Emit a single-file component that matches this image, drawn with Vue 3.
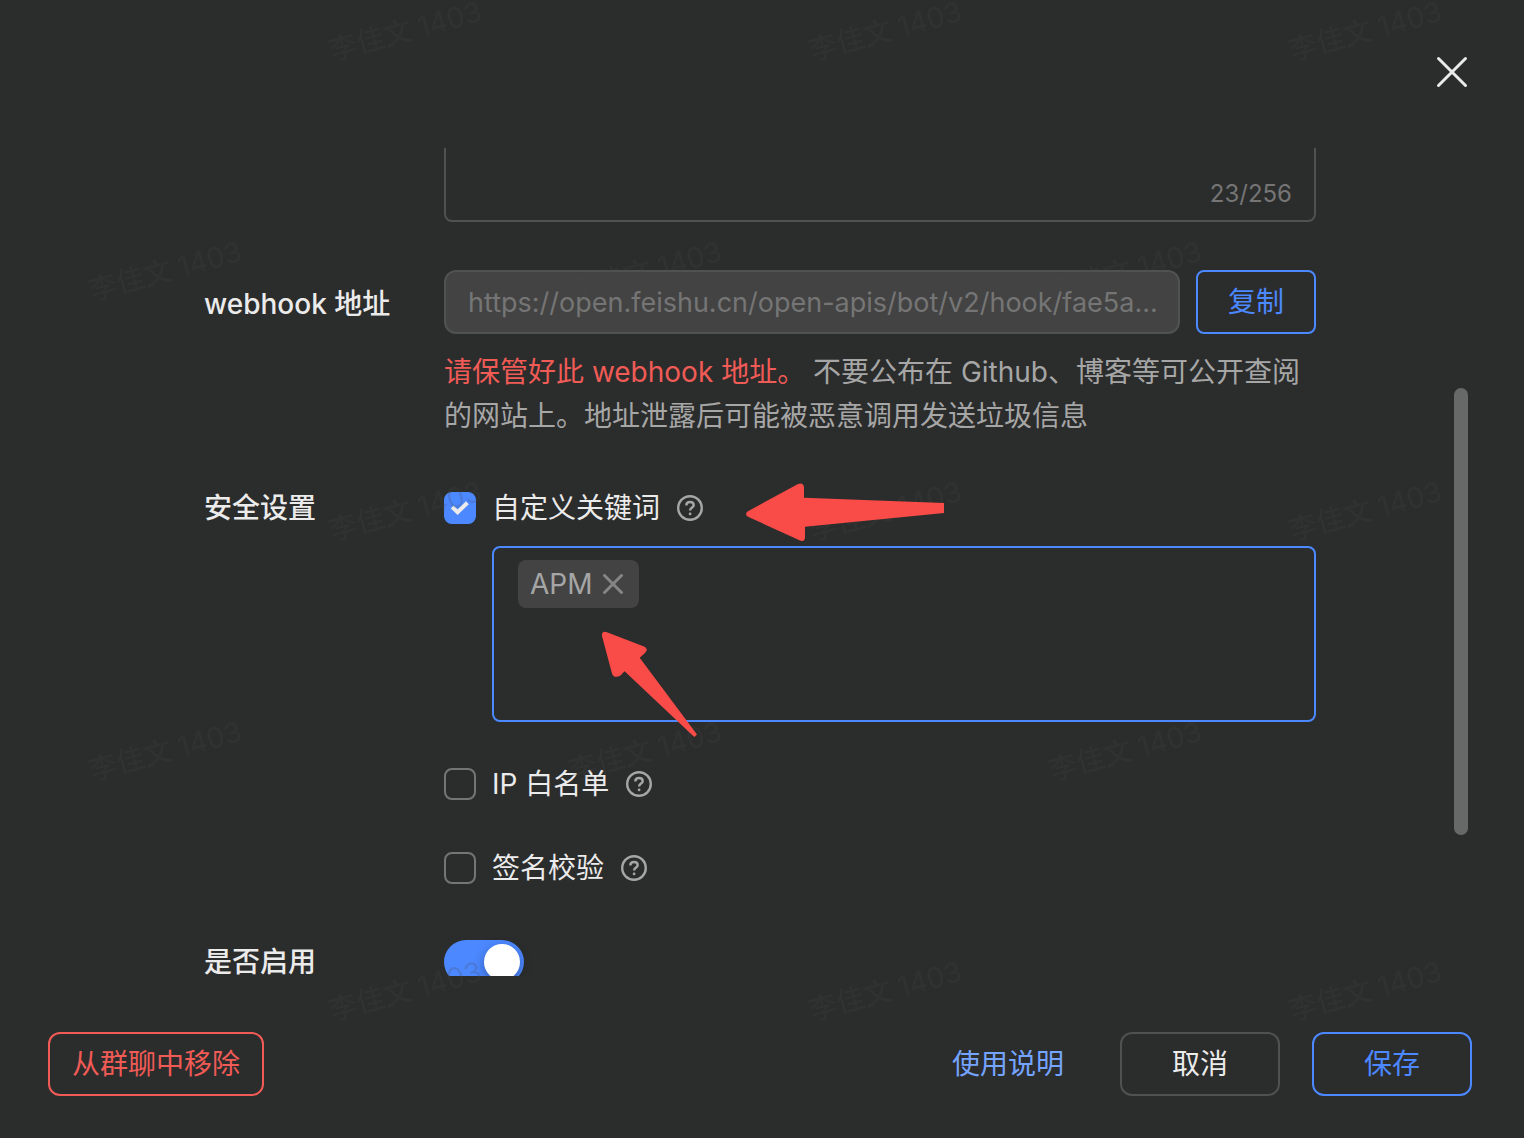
<template>
  <div class="dialog">
    <header class="dialog__header">
      <button class="dialog__close" type="button">
        <svg width="32" height="32" viewBox="0 0 32 32">
          <path d="M2.500 2.500L29.500 29.500M29.500 2.500L2.500 29.500" />
        </svg>
      </button>
    </header>

    <main class="dialog__body">
      <form class="form" @submit.prevent>
        <div class="form__row">
          <span class="form__label" />
          <div class="description">
            <textarea v-model="description" class="description__input" />
            <span class="description__counter">23/256</span>
          </div>
        </div>

        <div class="form__row">
          <label class="form__label form__label--input" for="webhook">webhook 地址</label>
          <div>
            <div class="webhook">
              <input id="webhook" class="webhook__input" type="text" :value="webhook" disabled>
              <button class="btn btn--primary btn--copy" type="button">复制</button>
            </div>
            <p class="webhook__hint">
              <span class="webhook__warning">请保管好此 webhook 地址。</span>
              不要公布在 Github、博客等可公开查阅的网站上。地址泄露后可能被恶意调用发送垃圾信息
            </p>
          </div>
        </div>

        <div class="form__row">
          <span class="form__label">安全设置</span>
          <div class="options">
            <div v-for="option in options" :key="option.id" class="option">
              <div class="option__head">
                <span class="checkbox">
                  <input :id="option.id" v-model="option.checked" class="checkbox__input" type="checkbox">
                  <svg v-if="option.checked" class="checkbox__mark" width="32" height="32" viewBox="0 0 32 32">
                    <path d="M8.200 15L13.600 20.200L23.400 10.800" />
                  </svg>
                </span>
                <label :for="option.id">{{ option.title }}</label>
                <svg class="help" width="28" height="28" viewBox="0 0 28 28">
                  <circle cx="14" cy="14" r="11.800" />
                  <path d="M10.3 11.4C10.3 9.3 11.9 8 14 8C16.1 8 17.7 9.3 17.7 11.2C17.7 13.5 14.1 13.6 14.1 16.4" />
                  <circle class="help__dot" cx="14.1" cy="19.9" r="1.4" />
                </svg>
              </div>
              <div v-if="option.checked" class="keywords">
                <span v-for="word in keywords" :key="word" class="tag">
                  {{ word }}
                  <button class="tag__remove" type="button" @click="removeKeyword(word)">
                    <svg width="20" height="20" viewBox="0 0 20 20">
                      <path d="M1.5 1.5L18.5 18.5M18.5 1.5L1.5 18.5" />
                    </svg>
                  </button>
                </span>
              </div>
            </div>

            <svg class="arrows" width="520" height="260" viewBox="0 0 520 260">
              <path d="M303.5 25.500Q300.500 28 303.5 30.500L356 54.500Q361 56.500 361 51V40.700L500 27V17L360 11.700V1.500Q359.500 -4 354 -2Z" />
              <path d="M158 150Q157.500 144.500 163 146.200L200 160.500Q205 163 201 167L195.700 171.700L253 248.500L250.300 251L180.600 185.300L176.500 189.500Q170 193 168 187.500Z" />
            </svg>
          </div>
        </div>

        <div class="form__row">
          <label class="form__label" for="enabled">是否启用</label>
          <input id="enabled" v-model="enabled" class="switch" type="checkbox">
        </div>
      </form>
      <div class="scrollbar" />
    </main>

    <footer class="dialog__footer">
      <button class="btn btn--danger" type="button">从群聊中移除</button>
      <a class="link" href="#">使用说明</a>
      <button class="btn" type="button">取消</button>
      <button class="btn btn--primary" type="button">保存</button>
    </footer>

    <svg class="watermark">
      <defs>
        <pattern id="mark" x="60" y="-90" width="480" height="480" patternUnits="userSpaceOnUse">
          <text transform="translate(345 120) rotate(-15)" dy="11">李佳文 1403</text>
          <text transform="translate(105 360) rotate(-15)" dy="11">李佳文 1403</text>
        </pattern>
      </defs>
      <rect width="100%" height="100%" fill="url(#mark)" />
    </svg>
  </div>
</template>

<script setup>
import {ref} from 'vue';

const description = ref('');
const webhook = 'https://open.feishu.cn/open-apis/bot/v2/hook/fae5a...';
const enabled = ref(true);
const keywords = ref(['APM']);

const options = ref([
  {id: 'keyword', title: '自定义关键词', checked: true},
  {id: 'ip', title: 'IP 白名单', checked: false},
  {id: 'sign', title: '签名校验', checked: false},
]);

const removeKeyword = (word) => {
  keywords.value = keywords.value.filter((item) => item !== word);
};
</script>

<style>
body{
  margin: 0;
  background: #2b2c2c;
}
</style>

<style scoped>
.dialog{
  position: relative;
  display: flex;
  flex-direction: column;
  height: 100vh;
  overflow: hidden;
  background: #2b2c2c;
  color: #ebebeb;
  font-family: Inter, "Noto Sans CJK SC", sans-serif;
  font-size: 28px;
  line-height: 44px;
}

.dialog *{
  box-sizing: border-box;
}

button,
input,
textarea{
  margin: 0;
  font: inherit;
  color: inherit;
}

svg{
  display: block;
  flex: none;
}

.dialog__header{
  display: flex;
  justify-content: flex-end;
  padding: 56px 56px 60px;
}

.dialog__close,
.tag__remove{
  padding: 0;
  border: 0;
  background: none;
  cursor: pointer;
}

.dialog__close path{
  stroke: #ebebeb;
  stroke-width: 3;
  stroke-linecap: round;
}

.dialog__body{
  position: relative;
  flex: 1;
  min-height: 0;
  overflow: hidden;
}

.form{
  display: flex;
  flex-direction: column;
  gap: 48px;
  padding: 0 208px 0 204px;
}

.form__row{
  display: grid;
  grid-template-columns: 240px 1fr;
}

.form__label{
  font-weight: 500;
}

.form__label--input{
  padding-top: 12px;
}

.description{
  position: relative;
}

.description__input{
  display: block;
  width: 100%;
  height: 74px;
  border: 2px solid #505151;
  border-top: 0;
  border-radius: 0 0 8px 8px;
  background: none;
  resize: none;
  outline: none;
}

.description__counter{
  position: absolute;
  right: 24px;
  bottom: 6px;
  font-size: 24px;
  color: #757575;
}

.webhook{
  display: flex;
  gap: 16px;
}

.webhook__input{
  flex: 1;
  min-width: 0;
  height: 64px;
  padding: 0 12px 0 22px;
  border: 2px solid #505151;
  border-radius: 12px;
  background: #434343;
  color: #757575;
  font-size: 27px;
}

.webhook__hint{
  margin: 16px 0 0;
  color: #a6a6a6;
}

.webhook__warning{
  color: #f05b56;
}

.btn{
  width: 160px;
  height: 64px;
  padding: 0;
  border: 2px solid #505151;
  border-radius: 12px;
  background: none;
  cursor: pointer;
}

.btn--primary{
  border-color: #4c88ff;
  color: #4c88ff;
}

.btn--danger{
  width: auto;
  margin-right: auto;
  padding: 0 22px;
  border-color: #f05b56;
  color: #f05b56;
}

.btn--copy{
  width: 120px;
  border-radius: 8px;
}

.options{
  position: relative;
  display: flex;
  flex-direction: column;
  gap: 40px;
  padding-bottom: 2px;
}

.option__head{
  display: flex;
  align-items: center;
  gap: 16px;
}

.checkbox{
  position: relative;
  width: 32px;
  height: 32px;
}

.checkbox__input{
  display: block;
  width: 32px;
  height: 32px;
  border: 2px solid #757575;
  border-radius: 8px;
  appearance: none;
}

.checkbox__input:checked{
  border-color: #4c88ff;
  background: #4c88ff;
}

.checkbox__mark{
  position: absolute;
  top: 0;
  left: 0;
  fill: none;
  stroke: #ebebeb;
  stroke-width: 4;
  pointer-events: none;
}

.help{
  fill: none;
  stroke: #a6a6a6;
  stroke-width: 2.4;
}

.help__dot{
  fill: #a6a6a6;
  stroke: none;
}

.keywords{
  display: flex;
  align-items: flex-start;
  height: 176px;
  margin: 16px 0 0 48px;
  padding: 12px 24px;
  border: 2px solid #4c88ff;
  border-radius: 8px;
}

.tag{
  display: flex;
  align-items: center;
  gap: 10px;
  height: 48px;
  padding: 0 16px 0 12px;
  border-radius: 8px;
  background: #434343;
  color: #a6a6a6;
}

.tag__remove path{
  stroke: #858585;
  stroke-width: 3;
  stroke-linecap: round;
}

.arrows{
  position: absolute;
  top: 0;
  left: 0;
  z-index: 1;
  overflow: visible;
  fill: #f94b47;
  pointer-events: none;
}

.switch{
  position: relative;
  width: 80px;
  height: 44px;
  border-radius: 22px;
  background: #757575;
  appearance: none;
}

.switch::after{
  content: '';
  position: absolute;
  top: 4px;
  left: 4px;
  width: 36px;
  height: 36px;
  border-radius: 50%;
  background: #fff;
  box-shadow: 0 4px 12px rgba(0, 0, 0, 0.3);
}

.switch:checked{
  background: #4c88ff;
}

.switch:checked::after{
  left: 40px;
}

.scrollbar{
  position: absolute;
  top: 29%;
  right: 56px;
  width: 14px;
  height: 54%;
  border-radius: 7px;
  background: #676868;
}

.dialog__footer{
  display: flex;
  align-items: center;
  gap: 32px;
  padding: 56px 52px 42px 48px;
}

.link{
  margin-right: 24px;
  color: #75a4ff;
  text-decoration: none;
}

.watermark{
  position: absolute;
  top: 0;
  left: 0;
  width: 100%;
  height: 100%;
  pointer-events: none;
}

.watermark text{
  fill: rgba(68, 70, 71, 0.2);
  text-anchor: middle;
}
</style>
